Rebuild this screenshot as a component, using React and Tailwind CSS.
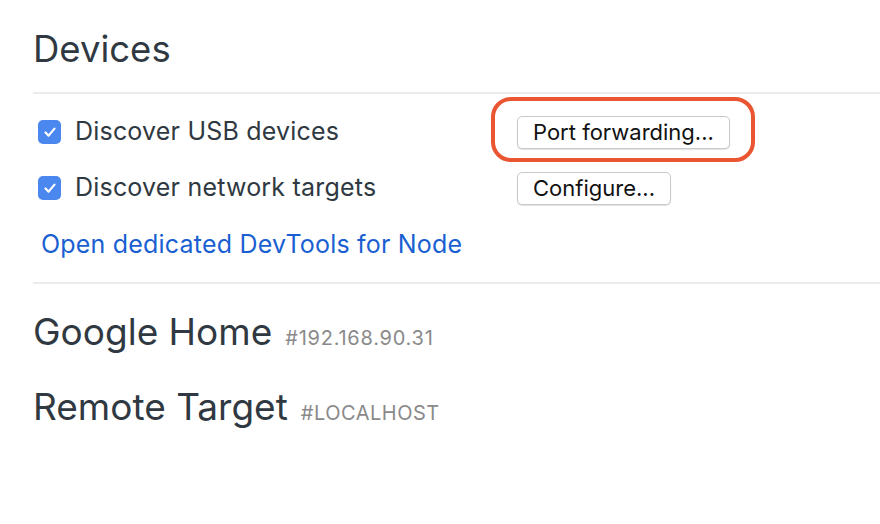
import React from "react";

function Check() {
  return (
    <div className="w-[23px] h-[24px] rounded-[5px] bg-[#4a87ee] flex items-center justify-center shrink-0">
      <svg width="14" height="14" viewBox="0 0 14 14" fill="none">
        <path d="M2.5 7.5 L5.6 10.6 L11.5 3.6" stroke="white" strokeWidth="2.2" strokeLinecap="round" strokeLinejoin="round" />
      </svg>
    </div>
  );
}

function Btn({ children }) {
  return (
    <button className="h-[33px] px-[15px] bg-white border border-[#c9c9c9] rounded-[5px] shadow-[0_1px_1px_rgba(0,0,0,0.12)] text-[22px] leading-none text-[#111] flex items-center">
      {children}
    </button>
  );
}

export default function App() {
  return (
    <div
      className="relative w-[880px] h-[524px] bg-white overflow-hidden text-[#303942]"
      style={{ fontFamily: "Inter, 'Noto Sans', sans-serif" }}
    >
      <div className="pl-[33px] pt-[27px]">
        <h1 className="text-[36.5px] leading-[44px] font-normal">Devices</h1>
        <div className="mt-[21px] h-[2px] bg-[#ebebeb]" />
        <div className="mt-[10px]">
          <div className="h-[56px] flex items-center">
            <div className="w-[484px] flex items-center">
              <div className="ml-[5px]"><Check /></div>
              <span className="ml-[14px] text-[25px] tracking-[0.2px]">Discover USB devices</span>
            </div>
            <Btn>Port forwarding...</Btn>
          </div>
          <div className="h-[56px] flex items-center">
            <div className="w-[484px] flex items-center">
              <div className="ml-[5px]"><Check /></div>
              <span className="ml-[14px] text-[25px] tracking-[0.2px]">Discover network targets</span>
            </div>
            <Btn>Configure...</Btn>
          </div>
          <div className="h-[57px] flex items-center">
            <span className="ml-[8px] text-[25px] tracking-[0.2px] text-[#1a5fd2]">Open dedicated DevTools for Node</span>
          </div>
        </div>
        <div className="mt-[9px] h-[2px] bg-[#ebebeb]" />
        <div className="mt-[26px] flex items-baseline">
          <span className="text-[37px] leading-[44px]">Google Home</span>
          <span className="ml-[13px] text-[20px] tracking-[0.75px] text-[#8a8a8a]">#192.168.90.31</span>
        </div>
        <div className="mt-[31px] flex items-baseline">
          <span className="text-[37px] leading-[44px]">Remote Target</span>
          <span className="ml-[13px] text-[20px] tracking-[0.5px] text-[#8a8a8a]">#LOCALHOST</span>
        </div>
      </div>
      <div className="absolute left-[491px] top-[97px] w-[264px] h-[65px] border-[4px] border-[#ea5631] rounded-[20px] pointer-events-none" />
    </div>
  );
}
